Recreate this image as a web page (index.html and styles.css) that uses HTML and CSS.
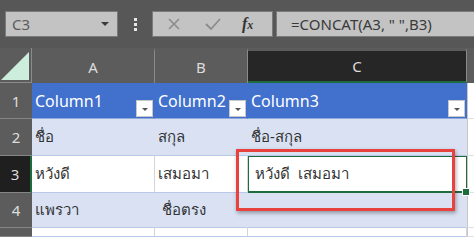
FILE: index.html
```html
<!DOCTYPE html>
<html lang="th">
<head>
    <meta charset="UTF-8">
    <title>CONCAT</title>
    <link rel="stylesheet" href="styles.css">
</head>
<body>
    <div class="formula-bar">
        <div class="name-box">
            <span>C3</span>
            <span class="caret"></span>
        </div>
        <div class="grip"><i></i><i></i><i></i></div>
        <div class="fx-tools">
            <svg class="tool" width="16" height="16" viewBox="0 0 16 16"><path d="M3 3 L13 13 M13 3 L3 13" stroke="#8c8c8c" stroke-width="1.6" fill="none"/></svg>
            <svg class="tool" width="18" height="16" viewBox="0 0 18 16"><path d="M2 8 L7 13 L16 3" stroke="#8c8c8c" stroke-width="1.8" fill="none"/></svg>
            <span class="fx">f<sub>x</sub></span>
        </div>
        <div class="formula">=CONCAT(A3, " ",B3)</div>
    </div>

    <div class="sheet">
        <div class="corner"></div>
        <div class="col-head">A</div>
        <div class="col-head">B</div>
        <div class="col-head active">C</div>
        <div class="col-head rest"></div>

        <div class="row-head">1</div>
        <div class="cell th">Column1<span class="filter"></span></div>
        <div class="cell th">Column2<span class="filter"></span></div>
        <div class="cell th">Column3<span class="filter"></span></div>
        <div class="cell blank"></div>

        <div class="row-head">2</div>
        <div class="cell band">ชื่อ</div>
        <div class="cell band">สกุล</div>
        <div class="cell band">ชื่อ-สกุล</div>
        <div class="cell blank"></div>

        <div class="row-head active">3</div>
        <div class="cell">หวังดี</div>
        <div class="cell">เสมอมา</div>
        <div class="cell selected">หวังดี&nbsp; เสมอมา</div>
        <div class="cell blank"></div>

        <div class="row-head">4</div>
        <div class="cell band">แพรวา</div>
        <div class="cell band">&nbsp;ชื่อตรง</div>
        <div class="cell band"></div>
        <div class="cell blank"></div>

        <div class="row-head"></div>
        <div class="cell"></div>
        <div class="cell"></div>
        <div class="cell"></div>
        <div class="cell blank"></div>

        <div class="highlight"></div>
    </div>
</body>
</html>
```

FILE: styles.css
```css
* {
    margin: 0;
    padding: 0;
    box-sizing: border-box;
}

body {
    width: 474px;
    height: 237px;
    overflow: hidden;
    background-color: #575757;
    font-family: 'Noto Sans', 'Open Sans', sans-serif;
}

/* formula bar */
.formula-bar {
    height: 48px;
    padding: 11px 0 0 5px;
    display: flex;
    align-items: flex-start;
}

.name-box {
    width: 113px;
    height: 26px;
    background-color: #c3c3c3;
    border: 1px solid #7a7a7a;
    display: flex;
    align-items: center;
    justify-content: space-between;
    padding: 0 8px 0 6px;
    color: #5c5c5c;
    font-size: 15px;
}

.caret {
    width: 0;
    height: 0;
    border-left: 4px solid transparent;
    border-right: 4px solid transparent;
    border-top: 4px solid #3a3a3a;
}

.grip {
    width: 34px;
    height: 26px;
    display: flex;
    flex-direction: column;
    align-items: center;
    justify-content: center;
    gap: 2px;
}

.grip i {
    width: 3px;
    height: 3px;
    background-color: #e6e6e6;
}

.fx-tools {
    width: 121px;
    height: 26px;
    background-color: #c3c3c3;
    border: 1px solid #7a7a7a;
    display: flex;
    align-items: center;
    padding-left: 13px;
}

.tool {
    margin-right: 22px;
}

.fx {
    font-family: 'Liberation Serif', serif;
    font-style: italic;
    font-weight: bold;
    font-size: 16px;
    color: #333;
    margin-left: -2px;
}

.fx sub {
    font-size: 12px;
    vertical-align: 0;
}

.formula {
    flex: 1;
    height: 26px;
    margin-left: 3px;
    background-color: #c3c3c3;
    border: 1px solid #7a7a7a;
    border-right: none;
    padding-left: 14px;
    color: #3a3a3a;
    font-size: 15px;
    line-height: 24px;
}

/* grid */
.sheet {
    position: relative;
    display: grid;
    grid-template-columns: 32px 123px 93px 219px 7px;
    grid-template-rows: 35px 36px 37px 37px 35px 9px;
}

.corner {
    background-color: #5c5c5c;
    border-right: 1px solid #8a8a8a;
    border-bottom: 1px solid #8a8a8a;
    position: relative;
}

.corner::after {
    content: "";
    position: absolute;
    right: 2px;
    bottom: 2px;
    border-left: 28px solid transparent;
    border-bottom: 28px solid #cdeedd;
}

.col-head {
    background-color: #5c5c5c;
    color: #dcdcdc;
    font-size: 15px;
    display: flex;
    align-items: center;
    justify-content: center;
    border-right: 1px solid #8a8a8a;
    border-top: 3px solid #5c5c5c;
}

.col-head.active {
    background-color: #262626;
    border-bottom: 2px solid #1e6b3e;
    border-top-color: #5c5c5c;
}

.col-head.rest {
    border-right: none;
}

.row-head {
    background-color: #5c5c5c;
    color: #dcdcdc;
    font-size: 15px;
    display: flex;
    align-items: center;
    justify-content: center;
    border-bottom: 1px solid #858585;
}

.row-head.active {
    background-color: #1f1f1f;
    border-right: 2px solid #1e6b3e;
}

.cell {
    background-color: #fff;
    color: #333;
    font-size: 15px;
    padding-left: 3px;
    display: flex;
    align-items: center;
    border-right: 1px solid #d4d4d4;
    border-bottom: 1px solid #b8c8e8;
    white-space: nowrap;
}

.cell.band {
    background-color: #d9e1f3;
    border-right-color: #d9e1f3;
}

.cell.th {
    position: relative;
    background-color: #4170cd;
    color: #fff;
    font-size: 16px;
    border-right-color: #4170cd;
    border-bottom-color: #8eaadb;
}

.cell.blank {
    border-right: none;
    border-left: 1px solid #c8c8c8;
    border-bottom-color: #e0e0e0;
}

.filter {
    position: absolute;
    right: 1px;
    bottom: 1px;
    width: 17px;
    height: 17px;
    background-color: #fff;
    border: 1px solid #c8c8c8;
}

.filter::after {
    content: "";
    position: absolute;
    left: 5px;
    top: 7px;
    border-left: 3px solid transparent;
    border-right: 3px solid transparent;
    border-top: 3px solid #555;
}

.cell.selected {
    position: relative;
    padding-left: 6px;
    border: 1px solid #1e6b3e;
    border-left-width: 1px;
    border-bottom-width: 2px;
}

.cell.selected::after {
    content: "";
    position: absolute;
    right: -4px;
    bottom: -5px;
    width: 6px;
    height: 6px;
    background-color: #1e6b3e;
    border: 1px solid #fff;
}

/* red mark over the result cell */
.highlight {
    position: absolute;
    left: 236px;
    top: 101px;
    width: 219px;
    height: 62px;
    border: 3px solid #e8423f;
    box-shadow: 1px 2px 4px rgba(0, 0, 0, 0.35);
    pointer-events: none;
}
```
